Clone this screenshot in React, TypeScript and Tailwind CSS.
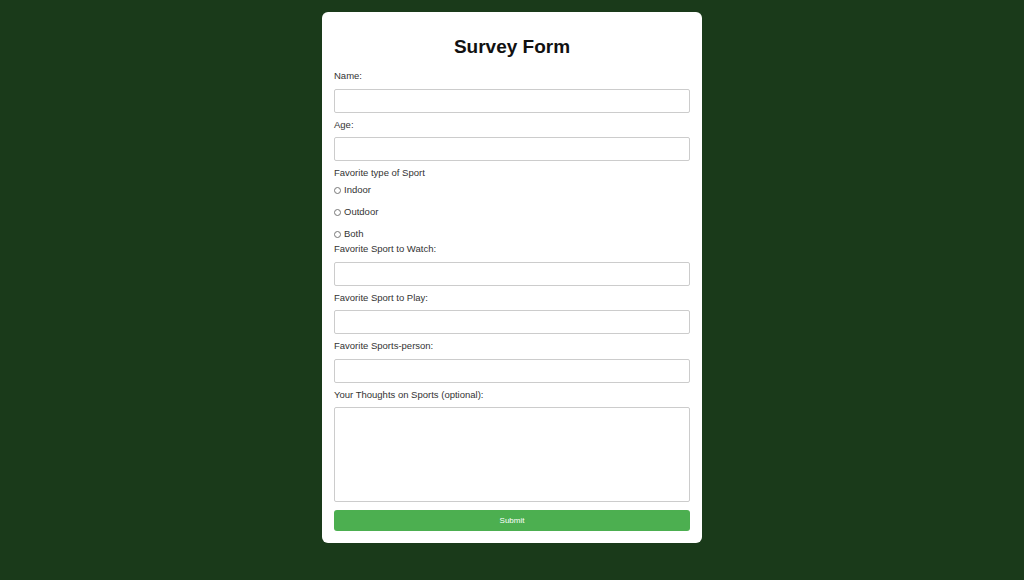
import { useState } from 'react';

const fields = [
  { id: 'watch', label: 'Favorite Sport to Watch:' },
  { id: 'play', label: 'Favorite Sport to Play:' },
  { id: 'person', label: 'Favorite Sports-person:' },
];

function Field({ id, label }: { id: string; label: string }) {
  return (
    <div className="mb-[6px]">
      <label htmlFor={id} className="block h-[12px] leading-[12px] text-[9.5px] text-[#333] mb-[6.5px]">
        {label}
      </label>
      <input
        id={id}
        type="text"
        className="block w-full h-[24px] border border-[#ccc] rounded-[2px] bg-white px-2 text-[10px] outline-none"
      />
    </div>
  );
}

export default function App() {
  const [sport, setSport] = useState('');

  return (
    <div
      className="min-h-screen bg-[#1a3a1a] pt-[12px] pb-[37px]"
      style={{ fontFamily: '"Liberation Sans", Arial, sans-serif' }}
    >
      <form
        className="mx-auto w-[380px] bg-white rounded-[6px] p-[12px]"
        onSubmit={e => e.preventDefault()}
      >
        <h1 className="mt-[11px] mb-[11px] h-[24px] leading-[24px] text-center text-[19px] font-bold text-[#111]">
          Survey Form
        </h1>

        <Field id="name" label="Name:" />
        <Field id="age" label="Age:" />

        <div className="h-[12px] leading-[12px] text-[9.5px] text-[#333]">Favorite type of Sport</div>
        <div className="mt-[5px] flex flex-col gap-[10px] mb-[3px]">
          {['Indoor', 'Outdoor', 'Both'].map(opt => (
            <label key={opt} className="flex items-center h-[12px] text-[9.5px] text-[#333]">
              <input
                type="radio"
                name="sport"
                checked={sport === opt}
                onChange={() => setSport(opt)}
                className="appearance-none w-[7px] h-[7px] rounded-full border border-[#777] bg-white mr-[3px] checked:bg-[#333]"
              />
              {opt}
            </label>
          ))}
        </div>

        {fields.map(f => (
          <Field key={f.id} id={f.id} label={f.label} />
        ))}

        <div className="mb-[8px]">
          <label htmlFor="thoughts" className="block h-[12px] leading-[12px] text-[9.5px] text-[#333] mb-[6.5px]">
            Your Thoughts on Sports (optional):
          </label>
          <textarea
            id="thoughts"
            className="block w-full h-[95px] border border-[#ccc] rounded-[2px] bg-white p-2 text-[10px] outline-none resize-none"
          />
        </div>

        <button
          type="submit"
          className="block w-full h-[21px] bg-[#4caf50] text-white text-[8px] rounded-[3px]"
        >
          Submit
        </button>
      </form>
    </div>
  );
}
